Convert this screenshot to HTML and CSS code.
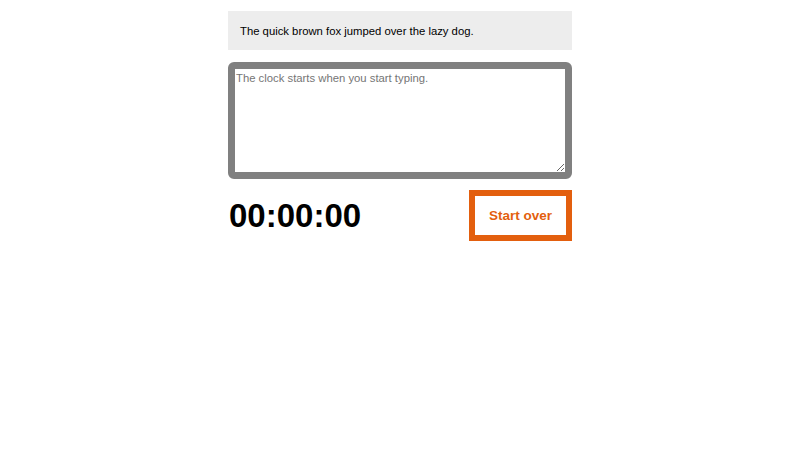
FILE: index.html
```html
<!DOCTYPE html>
<html lang="en">
<head>
<meta charset="utf-8">
<title>Typing test</title>
<link rel="stylesheet" href="styles.css">
</head>
<body>
<main class="wrap">
  <section class="prompt"><p>The quick brown fox jumped over the lazy dog.</p></section>
  <textarea class="test-area" placeholder="The clock starts when you start typing."></textarea>
  <div class="meta">
    <div class="timer">00:00:00</div>
    <button class="reset" type="button">Start over</button>
  </div>
</main>
</body>
</html>
```
FILE: styles.css
```css
html, body {
  margin: 0;
  padding: 0;
  background: #ffffff;
}
body {
  font-family: "Liberation Sans", Arial, sans-serif;
  color: #000;
}
.wrap {
  width: 344px;
  margin: 0 auto;
  padding-top: 11px;
  display: flex;
  flex-direction: column;
}
.prompt {
  background: #ededed;
  height: 39px;
  padding: 0 12px;
  display: flex;
  align-items: center;
  box-sizing: border-box;
}
.prompt p {
  margin: 0;
  font-size: 11.3px;
}
.test-area {
  margin-top: 12px;
  box-sizing: border-box;
  width: 344px;
  height: 117px;
  border: 7px solid #808080;
  border-radius: 6px;
  padding: 3px 1px;
  font-family: "Liberation Sans", Arial, sans-serif;
  font-size: 11.3px;
  outline: none;
}
.test-area::placeholder {
  color: #757575;
}
.meta {
  margin-top: 11px;
  display: flex;
  justify-content: space-between;
  align-items: center;
}
.timer {
  font-size: 33px;
  font-weight: bold;
  padding-left: 1px;
}
.reset {
  box-sizing: border-box;
  width: 103px;
  height: 51px;
  border: 6px solid #e35f0e;
  background: #fff;
  color: #e35f0e;
  font-family: "Liberation Sans", Arial, sans-serif;
  font-weight: bold;
  font-size: 13.5px;
  padding: 0;
  cursor: pointer;
}
```
